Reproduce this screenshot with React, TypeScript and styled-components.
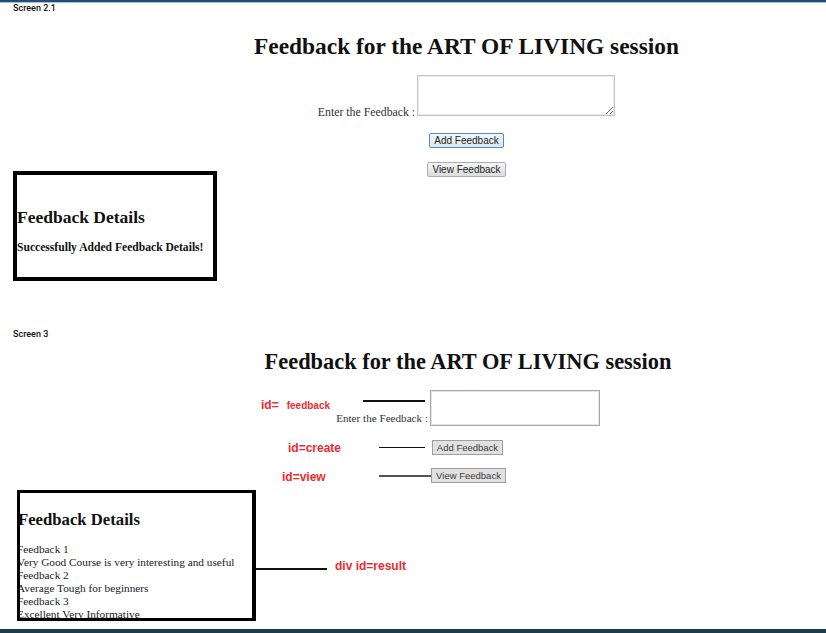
import React from 'react';
import styled, { createGlobalStyle } from 'styled-components';

type FeedbackItem = {
    title: string
    text: string
}

const feedbackList: FeedbackItem[] = [
    { title: 'Feedback 1', text: 'Very Good Course is very interesting and useful' },
    { title: 'Feedback 2', text: 'Average Tough for beginners' },
    { title: 'Feedback 3', text: 'Excellent Very Informative' },
];

const GlobalStyle = createGlobalStyle`
    html, body {
        margin: 0;
        padding: 0;
        background: #ffffff;
    }
`;

const App: React.FC = () => {
    return (
        <>
            <GlobalStyle />
            <Page>
                {/* Screen 2.1 */}
                <ScreenLabel $top={1}>Screen 2.1</ScreenLabel>
                <Stage $offset={107}>
                    <Title $size={23.4} $lineHeight={26} $top={20}>Feedback for the ART OF LIVING session</Title>
                    <FieldRow>
                        <FieldLabel $size={11.8}>Enter the Feedback :</FieldLabel>
                        <ClassicTextarea />
                    </FieldRow>
                    <ClassicButton $w={75} $top={17} $focused>Add Feedback</ClassicButton>
                    <ClassicButton $w={79} $top={14}>View Feedback</ClassicButton>
                </Stage>
                <ResultBox $w={204} $h={110} $top={-6} $left={13} $pad={32}>
                    <BoxTitle $size={17.5}>Feedback Details</BoxTitle>
                    <SuccessText>Successfully Added Feedback Details!</SuccessText>
                </ResultBox>

                {/* Screen 3 */}
                <ScreenLabel $top={48}>Screen 3</ScreenLabel>
                <Stage $offset={110}>
                    <Title $size={22.4} $lineHeight={24} $top={11}>Feedback for the ART OF LIVING session</Title>
                </Stage>

                <AnnotRow $left={261} $top={16}>
                    <IdTag $w={75} $top={9}>
                        id=<SmallTag>feedback</SmallTag>
                    </IdTag>
                    <LabelColumn>
                        <Connector $w={62} $h={2} $top={10} $left={27} />
                        <FieldLabel $size={11.15} $top={10}>Enter the Feedback :</FieldLabel>
                    </LabelColumn>
                    <PlainTextarea />
                </AnnotRow>

                <AnnotRow $left={288} $top={14}>
                    <IdTag $w={91} $top={2}>id=create</IdTag>
                    <Connector $w={46} $h={1} $top={7} />
                    <FlatButton $w={71} $left={7}>Add Feedback</FlatButton>
                </AnnotRow>

                <AnnotRow $left={282} $top={13}>
                    <IdTag $w={97} $top={2.5}>id=view</IdTag>
                    <Connector $w={52} $h={2} $top={7} $color="#555555" />
                    <FlatButton $w={75}>View Feedback</FlatButton>
                </AnnotRow>

                <AnnotRow $left={17} $top={6}>
                    <ResultBox $w={239} $h={131} $pad={17} $thin>
                        <BoxTitle $size={16.7} $indent={-2}>Feedback Details</BoxTitle>
                        <FeedbackLines>
                            {feedbackList.map((item) => (
                                <React.Fragment key={item.title}>
                                    <FeedbackLine>{item.title}</FeedbackLine>
                                    <FeedbackLine>{item.text}</FeedbackLine>
                                </React.Fragment>
                            ))}
                        </FeedbackLines>
                    </ResultBox>
                    <Connector $w={71} $h={2} $top={78} />
                    <IdTag $w={100} $top={70} $left={8}>div id=result</IdTag>
                </AnnotRow>

                <BottomBar />
            </Page>
        </>
    );
};

const Page = styled.div`
    width: 826px;
    height: 633px;
    box-sizing: border-box;
    display: flex;
    flex-direction: column;
    overflow: hidden;
    border-top: 2px solid #244c78;
    box-shadow: inset 0 1px 0 #a9bdd3;
    background: #ffffff;
`

const ScreenLabel = styled.div<{ $top: number }>`
    margin: ${(p) => p.$top}px 0 0 13px;
    font: 500 9px/10px Roboto, "Liberation Sans", sans-serif;
    color: #111111;
`

const Stage = styled.div<{ $offset: number }>`
    display: flex;
    flex-direction: column;
    align-items: center;
    padding-left: ${(p) => p.$offset}px;
`

const Title = styled.h1<{ $size: number; $lineHeight: number; $top: number }>`
    margin: ${(p) => p.$top}px 0 0;
    font: bold ${(p) => p.$size}px/${(p) => p.$lineHeight}px "Liberation Serif", "Times New Roman", serif;
    color: #111111;
    white-space: nowrap;
`

const FieldRow = styled.div`
    display: flex;
    align-items: flex-end;
    gap: 2px;
    margin-top: 16px;
`

const FieldLabel = styled.label<{ $size: number; $top?: number }>`
    display: block;
    margin: ${(p) => p.$top ?? 0}px 0 -2px;
    font: ${(p) => p.$size}px/12px "Liberation Serif", "Times New Roman", serif;
    color: #333333;
    text-align: right;
    white-space: nowrap;
`

const ClassicTextarea = styled.textarea`
    width: 198px;
    height: 41px;
    margin: 0;
    padding: 2px;
    box-sizing: border-box;
    border: 1px solid #c4c4c4;
    box-shadow: inset 0 0 0 1px #ececec;
    resize: vertical;
    outline: none;
`

const PlainTextarea = styled.textarea`
    width: 170px;
    height: 36px;
    margin: 0;
    padding: 2px;
    box-sizing: border-box;
    border: 1px solid #a9a9a9;
    box-shadow: inset 0 0 0 1px #e6e6e6;
    resize: none;
    outline: none;
`

const ClassicButton = styled.button<{ $w: number; $top: number; $focused?: boolean }>`
    width: ${(p) => p.$w}px;
    height: 15px;
    margin-top: ${(p) => p.$top}px;
    padding: 0;
    font: 10px/13px "Liberation Sans", Arial, sans-serif;
    color: #222222;
    background: ${(p) => (p.$focused ? 'linear-gradient(#f2f7fc, #dde8f3)' : 'linear-gradient(#f5f5f5, #dcdcdc)')};
    border: 1px solid ${(p) => (p.$focused ? '#4d8bc6' : '#acacac')};
    border-radius: 2px;
`

const FlatButton = styled.button<{ $w: number; $left?: number }>`
    width: ${(p) => p.$w}px;
    height: 15px;
    margin: 0 0 0 ${(p) => p.$left ?? 0}px;
    padding: 0;
    font: 9.5px/13px "Liberation Sans", Arial, sans-serif;
    color: #3a3a3a;
    background: #e1e1e1;
    border: 1px solid #9e9e9e;
    border-radius: 0;
`

const ResultBox = styled.div<{ $w: number; $h: number; $pad: number; $top?: number; $left?: number; $thin?: boolean }>`
    width: ${(p) => p.$w}px;
    height: ${(p) => p.$h}px;
    margin: ${(p) => p.$top ?? 0}px 0 0 ${(p) => p.$left ?? 0}px;
    padding-top: ${(p) => p.$pad}px;
    box-sizing: border-box;
    border: ${(p) => (p.$thin ? 3 : 4)}px solid #000000;
    border-right-width: 4px;
    overflow: hidden;
    flex-shrink: 0;
`

const BoxTitle = styled.h2<{ $size: number; $indent?: number }>`
    margin: 0 0 0 ${(p) => p.$indent ?? 0}px;
    font: bold ${(p) => p.$size}px/20px "Liberation Serif", "Times New Roman", serif;
    color: #111111;
    white-space: nowrap;
`

const SuccessText = styled.p`
    margin: 14px 0 0;
    font: bold 11.6px/13px "Liberation Serif", "Times New Roman", serif;
    color: #111111;
    white-space: nowrap;
`

const FeedbackLines = styled.div`
    margin-top: 13px;
`

const FeedbackLine = styled.div`
    margin-left: -3px;
    font: 11.3px/13px "Liberation Serif", "Times New Roman", serif;
    color: #1a1a1a;
    white-space: nowrap;
`

const AnnotRow = styled.div<{ $left: number; $top: number }>`
    display: flex;
    align-items: flex-start;
    margin: ${(p) => p.$top}px 0 0 ${(p) => p.$left}px;
`

const LabelColumn = styled.div`
    display: flex;
    flex-direction: column;
    width: 94px;
    padding-right: 2px;
    box-sizing: border-box;
`

const Connector = styled.div<{ $w: number; $h: number; $top: number; $left?: number; $color?: string }>`
    width: ${(p) => p.$w}px;
    height: ${(p) => p.$h}px;
    margin: ${(p) => p.$top}px 0 0 ${(p) => p.$left ?? 0}px;
    background: ${(p) => p.$color ?? '#111111'};
    flex-shrink: 0;
`

const IdTag = styled.div<{ $w: number; $top: number; $left?: number }>`
    width: ${(p) => p.$w}px;
    margin: ${(p) => p.$top}px 0 0 ${(p) => p.$left ?? 0}px;
    font: bold 12px/13px "Liberation Sans", Arial, sans-serif;
    color: #ee2a2e;
    white-space: nowrap;
    flex-shrink: 0;
`

const SmallTag = styled.span`
    margin-left: 8px;
    font-size: 10px;
`

const BottomBar = styled.div`
    margin-top: auto;
    height: 4px;
    background: #1d3c4b;
    flex-shrink: 0;
`

export default App;
